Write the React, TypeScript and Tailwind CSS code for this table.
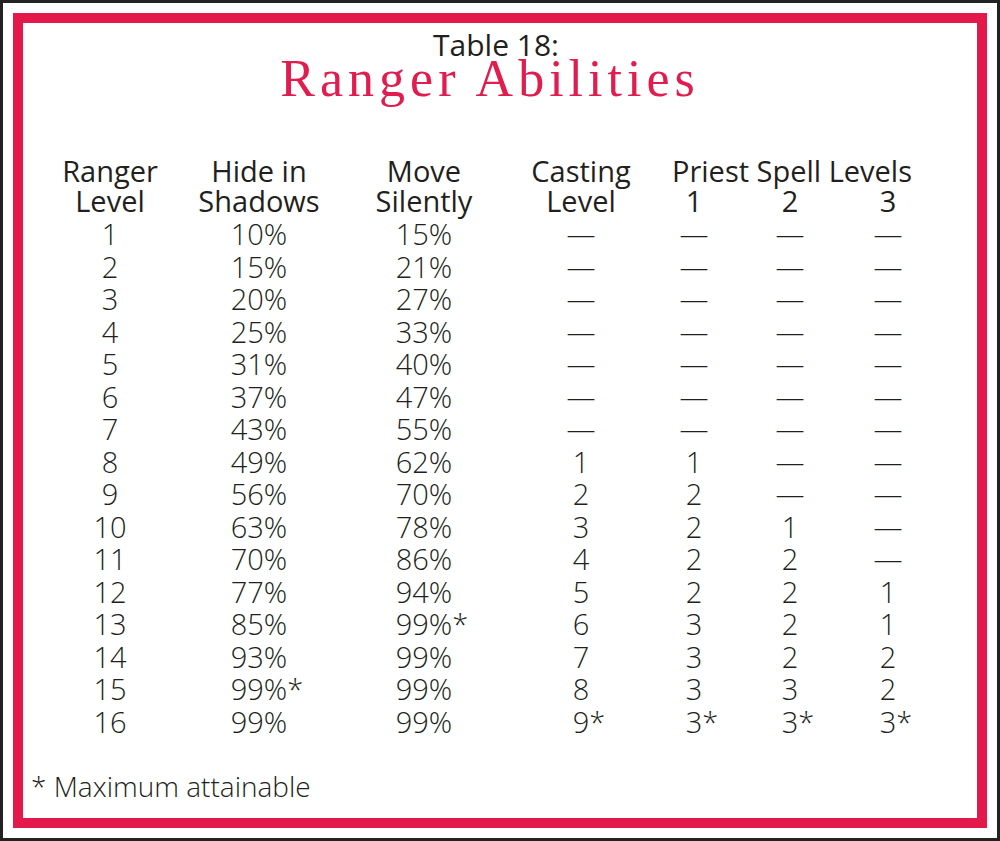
import React from "react";

const D = "—";
const rows: string[][] = [
  ["1", "10%", "15%", D, D, D, D],
  ["2", "15%", "21%", D, D, D, D],
  ["3", "20%", "27%", D, D, D, D],
  ["4", "25%", "33%", D, D, D, D],
  ["5", "31%", "40%", D, D, D, D],
  ["6", "37%", "47%", D, D, D, D],
  ["7", "43%", "55%", D, D, D, D],
  ["8", "49%", "62%", "1", "1", D, D],
  ["9", "56%", "70%", "2", "2", D, D],
  ["10", "63%", "78%", "3", "2", "1", D],
  ["11", "70%", "86%", "4", "2", "2", D],
  ["12", "77%", "94%", "5", "2", "2", "1"],
  ["13", "85%", "99%*", "6", "3", "2", "1"],
  ["14", "93%", "99%", "7", "3", "2", "2"],
  ["15", "99%*", "99%", "8", "3", "3", "2"],
  ["16", "99%", "99%", "9*", "3*", "3*", "3*"],
];

function Cell({ v }: { v: string }) {
  const star = v.endsWith("*");
  const base = star ? v.slice(0, -1) : v;
  return (
    <div className="text-center whitespace-nowrap">
      {base}
      {star && <span className="inline-block w-0">*</span>}
    </div>
  );
}

export default function App() {
  const font = { fontFamily: '"Open Sans", "Noto Sans", sans-serif' };
  const h = "text-[29px] leading-[30px] text-center whitespace-nowrap";
  return (
    <div
      className="w-[1000px] h-[841px] bg-white border-[3px] border-[#222222] p-[10px]"
      style={font}
    >
      <div className="h-full border-[10px] border-[#e3194b] flex flex-col text-[#231f20]">
        <div className="pt-[7px] flex flex-col items-center">
          <div className="text-[30px] leading-[30px] pr-[8px]">Table 18:</div>
          <div
            className="text-[52px] leading-[38px] text-[#e01d4e] tracking-[5px] pr-[20px]"
            style={{ fontFamily: '"Liberation Serif", serif' }}
          >
            Ranger Abilities
          </div>
        </div>
        <div className="mt-[58px] ml-[13px] grid grid-cols-[148px_150px_180px_134px_92px_100px_96px]">
          <div className={h}>Ranger</div>
          <div className={h}>Hide in</div>
          <div className={h}>Move</div>
          <div className={h}>Casting</div>
          <div className={`col-span-3 ${h}`}>Priest Spell Levels</div>
          <div className={h}>Level</div>
          <div className={h}>Shadows</div>
          <div className={h}>Silently</div>
          <div className={h}>Level</div>
          <div className={h}>1</div>
          <div className={h}>2</div>
          <div className={h}>3</div>
          {rows.map((r, i) => (
            <React.Fragment key={i}>
              {r.map((v, j) => (
                <div
                  key={j}
                  className={`text-[29px] leading-[32.5px] font-light ${i === 0 ? "mt-[2px]" : ""}`}
                >
                  <Cell v={v} />
                </div>
              ))}
            </React.Fragment>
          ))}
        </div>
        <div className="mt-[33px] pl-[8px] text-[28px] leading-[30px] font-light">
          * Maximum attainable
        </div>
      </div>
    </div>
  );
}
